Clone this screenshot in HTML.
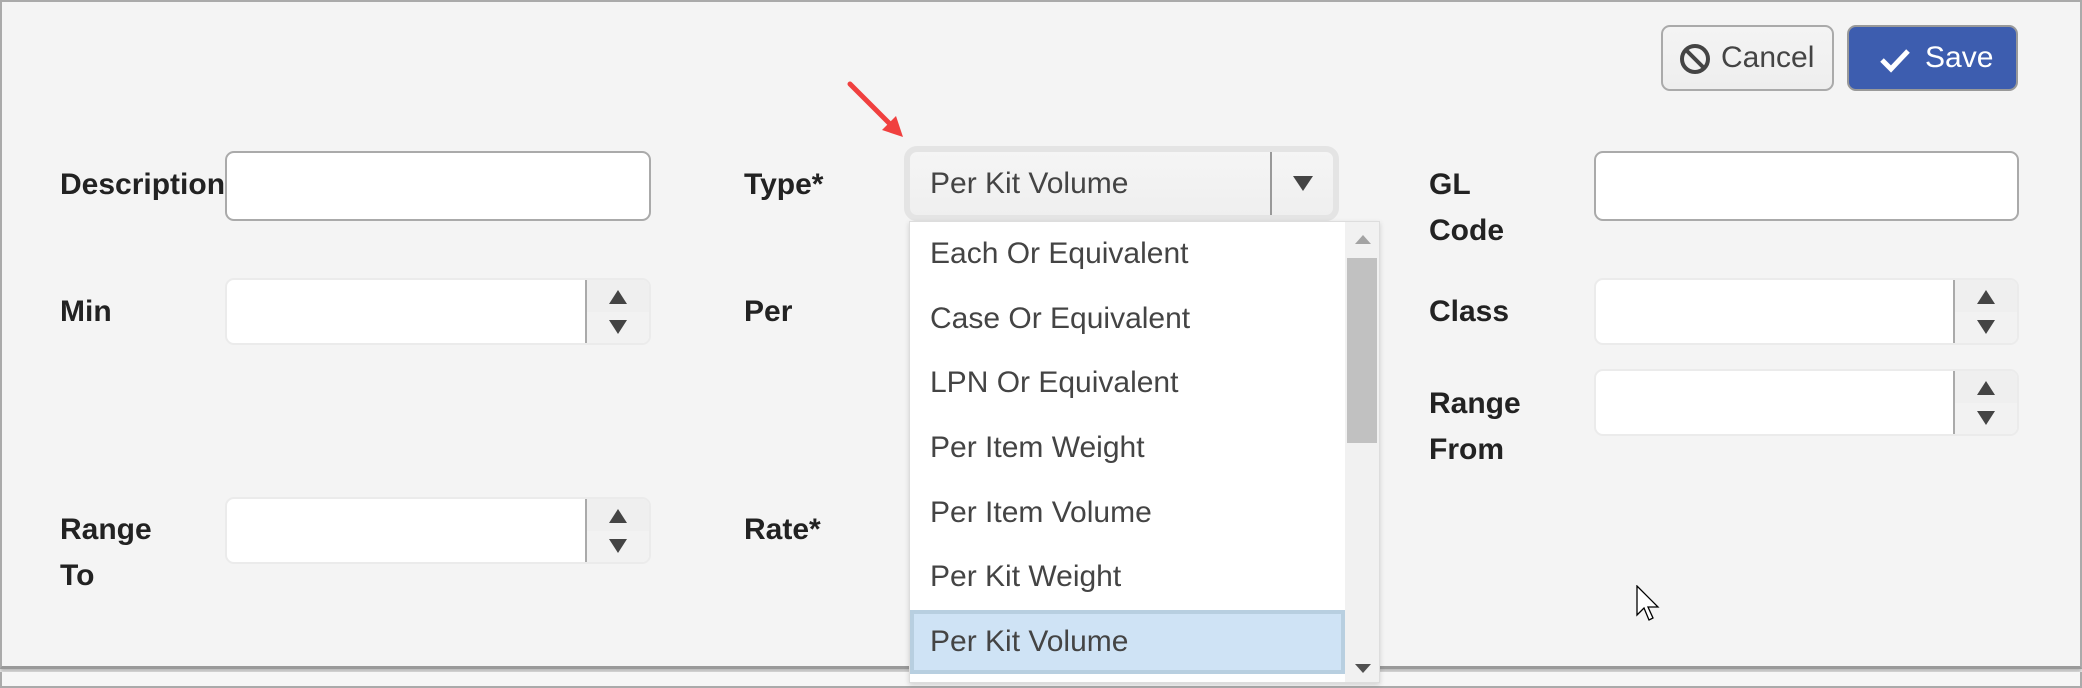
<!DOCTYPE html>
<html><head><meta charset="utf-8"><style>
*{margin:0;padding:0;box-sizing:border-box}
body{width:2082px;height:688px;background:#f4f4f4;font-family:"Liberation Sans",Roboto,sans-serif;position:relative;overflow:hidden}
.a{position:absolute}
.lbl{position:absolute;font-weight:bold;font-size:30px;color:#222;line-height:46px}
.inp{position:absolute;background:#fff;border:2px solid #aaa;border-radius:9px}
.sp{position:absolute;background:#fff;border:2px solid #ebebeb;border-radius:9px;overflow:hidden}
.sp .b{position:absolute;right:0;top:0;bottom:0;width:64px;background:#f2f2f2;border-left:2px solid #aaa}
.sp .b .h{position:absolute;left:0;right:0;top:0;height:50%;background:#efefef}
.up{position:absolute;left:22px;width:0;height:0;border-left:9px solid transparent;border-right:9px solid transparent;border-bottom:14px solid #444}
.dn{position:absolute;left:22px;width:0;height:0;border-left:9px solid transparent;border-right:9px solid transparent;border-top:14px solid #444}
.it{position:absolute;left:0;width:435px;height:64px;line-height:64px;padding-left:20px;font-size:30px;color:#444}
</style></head><body>
<!-- frame -->
<div class="a" style="left:0;top:0;width:2082px;height:669px;border:2px solid #aaa;border-bottom:3px solid #999;background:#f4f4f4;box-shadow:0 3px 4px rgba(0,0,0,.25)"></div>
<div class="a" style="left:0;top:672px;width:2082px;height:16px;background:#f6f6f6;border:2px solid #aaa;border-top:none"></div>

<!-- buttons -->
<div class="a" style="left:1661px;top:25px;width:173px;height:66px;border:2px solid #aaa;border-radius:9px;background:linear-gradient(#f4f4f4,#eee);font-size:30px;color:#444;line-height:62px">
<svg class="a" style="left:16px;top:16px" width="32" height="32" viewBox="0 0 32 32"><circle cx="16" cy="16" r="13" fill="none" stroke="#444" stroke-width="4"/><line x1="7" y1="7" x2="25" y2="25" stroke="#444" stroke-width="4"/></svg>
<span class="a" style="left:58px;top:0">Cancel</span></div>
<div class="a" style="left:1847px;top:25px;width:171px;height:66px;border:2px solid #999;border-radius:9px;background:#3d5daf;font-size:30px;color:#fff;line-height:62px">
<svg class="a" style="left:30px;top:20px" width="32" height="26" viewBox="0 0 32 26"><path d="M3 13 L12 22 L29 4" fill="none" stroke="#fff" stroke-width="5"/></svg>
<span class="a" style="left:76px;top:0">Save</span></div>

<!-- labels -->
<div class="lbl" style="left:60px;top:162px">Description</div>
<div class="lbl" style="left:744px;top:162px">Type*</div>
<div class="lbl" style="left:1429px;top:162px;width:120px">GL<br>Code</div>
<div class="lbl" style="left:60px;top:289px">Min</div>
<div class="lbl" style="left:744px;top:289px">Per</div>
<div class="lbl" style="left:1429px;top:289px">Class</div>
<div class="lbl" style="left:1429px;top:381px">Range<br>From</div>
<div class="lbl" style="left:60px;top:507px">Range<br>To</div>
<div class="lbl" style="left:744px;top:507px">Rate*</div>

<!-- inputs -->
<div class="inp" style="left:225px;top:151px;width:426px;height:70px"></div>
<div class="inp" style="left:1594px;top:151px;width:425px;height:70px"></div>

<div class="sp" style="left:225px;top:278px;width:426px;height:67px"><div class="b"><div class="h"></div><div class="up" style="top:10px"></div><div class="dn" style="top:40px"></div></div></div>
<div class="sp" style="left:1594px;top:278px;width:425px;height:67px"><div class="b"><div class="h"></div><div class="up" style="top:10px"></div><div class="dn" style="top:40px"></div></div></div>
<div class="sp" style="left:1594px;top:369px;width:425px;height:67px"><div class="b"><div class="h"></div><div class="up" style="top:10px"></div><div class="dn" style="top:40px"></div></div></div>
<div class="sp" style="left:225px;top:497px;width:426px;height:67px"><div class="b"><div class="h"></div><div class="up" style="top:10px"></div><div class="dn" style="top:40px"></div></div></div>

<!-- select -->
<div class="a" style="left:904px;top:146px;width:435px;height:75px;border:6px solid #e4e4e4;border-radius:13px;background:linear-gradient(#f5f5f5,#efefef)">
<span class="a" style="left:20px;top:0;line-height:63px;font-size:30px;color:#444">Per Kit Volume</span>
<div class="a" style="left:360px;top:0;bottom:0;border-left:2px solid #999"></div>
<div class="dn" style="left:383px;top:24px;border-left-width:10px;border-right-width:10px;border-top-width:15px"></div>
</div>

<!-- dropdown list -->
<div class="a" style="left:909px;top:221px;width:471px;height:462px;background:#fff;border:1px solid #ddd;box-shadow:0 2px 5px rgba(0,0,0,.15);overflow:hidden">
<div class="it" style="top:0">Each Or Equivalent</div>
<div class="it" style="top:65px">Case Or Equivalent</div>
<div class="it" style="top:129px">LPN Or Equivalent</div>
<div class="it" style="top:194px">Per Item Weight</div>
<div class="it" style="top:259px">Per Item Volume</div>
<div class="it" style="top:323px">Per Kit Weight</div>
<div class="it" style="top:388px;height:64px;background:#cfe3f5;border:4px solid #b8cfe0;line-height:56px;padding-left:16px">Per Kit Volume</div>
<div class="a" style="left:435px;top:0;width:36px;height:462px;background:#f1f1f1"></div>
<div class="a" style="left:437px;top:36px;width:30px;height:185px;background:#c1c1c1"></div>
<div class="up" style="left:445px;top:13px;border-left-width:8px;border-right-width:8px;border-bottom:9px solid #a3a3a3"></div>
<div class="dn" style="left:445px;top:442px;border-left-width:8px;border-right-width:8px;border-top:9px solid #505050"></div>
</div>

<!-- red arrow -->
<svg class="a" style="left:840px;top:74px" width="75" height="75" viewBox="0 0 75 75"><line x1="10" y1="10" x2="54" y2="54" stroke="#f0403f" stroke-width="5" stroke-linecap="round"/><path d="M63 63 L42 56 L56 42 Z" fill="#f0403f"/></svg>

<!-- cursor -->
<svg class="a" style="left:1636px;top:585px" width="26" height="40" viewBox="0 0 26 40"><path d="M1 1 L1 30 L8 23 L13 35 L17 33 L12 22 L22 22 Z" fill="#fff" stroke="#000" stroke-width="1.3"/></svg>
</body></html>
